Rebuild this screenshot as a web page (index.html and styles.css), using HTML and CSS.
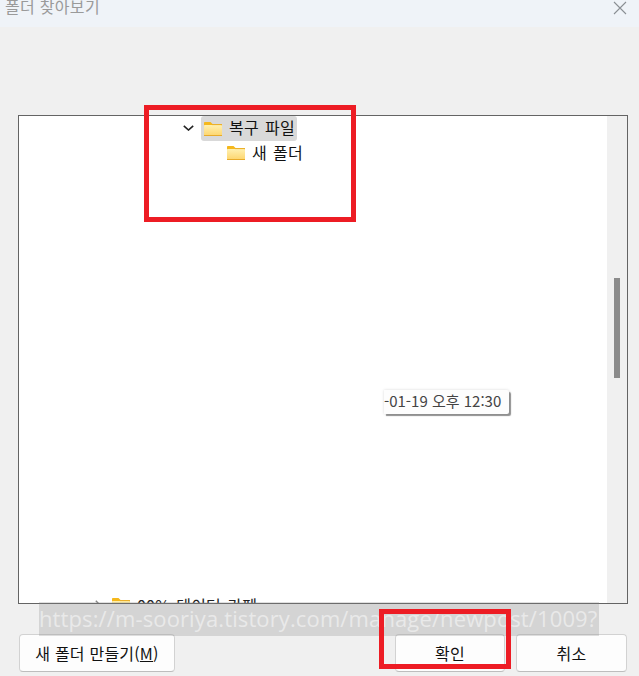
FILE: index.html
```html
<!DOCTYPE html>
<html lang="ko">
<head>
<meta charset="utf-8">
<title>폴더 찾아보기</title>
<link rel="stylesheet" href="styles.css">
</head>
<body>
<div class="dialog">
  <header class="titlebar">
    <span class="title">폴더 찾아보기</span>
    <svg class="close" width="14" height="14" viewBox="0 0 14 14"><path d="M1 1L13 13M13 1L1 13" stroke="#8a8f94" stroke-width="1.1" fill="none"/></svg>
  </header>
  <main class="content">
    <section class="treebox">
      <div class="tree">
        <div class="row row-root">
          <svg class="chevron" width="11" height="6" viewBox="0 0 11 6"><path d="M0.8 0.8L5.5 5L10.2 0.8" stroke="#222" stroke-width="1.6" fill="none"/></svg>
          <div class="selected">
            <svg class="folder" width="18" height="14" viewBox="0 0 18 14"><use href="#folder-shape"/></svg>
            <span>복구 파일</span>
          </div>
        </div>
        <div class="row row-child">
          <svg class="folder" width="18" height="14" viewBox="0 0 18 14"><use href="#folder-shape"/></svg>
          <span>새 폴더</span>
        </div>
        <div class="row row-clipped">
          <svg class="chevron-right" width="6" height="10" viewBox="0 0 6 10"><path d="M0.8 0.8L5 5L0.8 9.2" stroke="#888" stroke-width="1.4" fill="none"/></svg>
          <svg class="folder" width="18" height="14" viewBox="0 0 18 14"><use href="#folder-shape"/></svg>
          <span>00% 데이터 카페</span>
        </div>
      </div>
      <div class="scrollbar"><div class="thumb"></div></div>
      <div class="tooltip">-01-19 오후 12:30</div>
    </section>
    <footer class="buttons">
      <button class="btn btn-new">새 폴더 만들기(<u>M</u>)</button>
      <div class="btn-group">
        <button class="btn btn-ok">확인</button>
        <button class="btn btn-cancel">취소</button>
      </div>
    </footer>
  </main>
  <div class="url-overlay">https://m-sooriya.tistory.com/manage/newpost/1009?</div>
  <div class="mark mark-tree"></div>
  <div class="mark mark-ok"></div>
</div>
<svg class="defs" width="0" height="0">
  <defs>
    <linearGradient id="folder-fill" x1="0" y1="0" x2="0" y2="1">
      <stop offset="0" stop-color="#fff0b0"/>
      <stop offset="1" stop-color="#fdd56c"/>
    </linearGradient>
    <g id="folder-shape">
      <path d="M0 1.2A1 1 0 0 1 1 0H6.5L8.5 2H18V5H0Z" fill="#f5b81c"/>
      <rect x="0" y="3" width="18" height="11" rx="0.6" fill="url(#folder-fill)"/>
      <rect x="0" y="13" width="18" height="1" fill="#e8ab2a"/>
      <rect x="8" y="2.2" width="10" height="0.9" fill="#e9ae2e"/>
    </g>
  </defs>
</svg>
</body>
</html>
```
FILE: styles.css
```css
* { box-sizing: border-box; }
html, body { margin: 0; padding: 0; height: 100%; overflow: hidden; }
body { font-family: "Noto Sans CJK KR", "Noto Sans", sans-serif; background: #f0f0f0; color: #111; }

.dialog { position: relative; width: 639px; height: 676px; display: flex; flex-direction: column; overflow: hidden; }

.titlebar { height: 27px; flex: none; background: #eff3f8; display: flex; justify-content: space-between; padding: 0 12px 0 5px; overflow: hidden; }
.title { font-size: 16px; letter-spacing: 0.3px; line-height: 14px; color: #9a9a9a; margin-top: -1px; white-space: nowrap; }
.close { margin-top: 1px; }

.content { flex: 1; display: flex; flex-direction: column; padding: 88px 11px 5px 18px; }

.treebox { position: relative; height: 489px; flex: none; background: #fff; border: 1px solid #646464; display: flex; overflow: hidden; width: 610px; }
.tree { flex: 1; display: flex; flex-direction: column; font-size: 16px; letter-spacing: 0.2px; word-spacing: 1.5px; overflow: hidden; }
.row { display: flex; align-items: center; white-space: nowrap; }
.row-root { padding-left: 164px; height: 25px; gap: 7px; }
.selected { width: 96px; height: 25px; background: #d9d9d9; border-radius: 3px; display: flex; align-items: center; gap: 7px; padding-left: 3px; }
.selected span, .row-child span { position: relative; top: -2px; }
.row-child { padding-left: 208px; height: 25px; gap: 7px; }
.row-clipped { margin-top: auto; margin-bottom: -14px; height: 25px; padding-left: 76px; gap: 7px; color: #222; flex: none; }
.row-clipped .folder { margin-left: 4px; }
.folder { flex: none; display: block; }
.chevron { position: relative; top: -1px; }
.row-child .folder { position: relative; top: -1px; }

.scrollbar { width: 20px; flex: none; background: #f0f0f0; padding: 162px 0 0 7px; }
.thumb { width: 6px; height: 100px; background: #8b8b8b; }

.tooltip { position: absolute; left: 365px; top: 274px; width: 125px; height: 24px; background: #fdfdfd; border-radius: 0 2px 2px 0; box-shadow: 2px 2px 1px #8f8f8f, 0 0 3px #d8d8d8; font-size: 15px; line-height: 21px; color: #444; white-space: nowrap; overflow: hidden; }

.buttons { display: flex; justify-content: space-between; margin-top: 30px; padding: 0 1px; }
.btn-group { display: flex; gap: 11px; }
.btn { height: 38px; background: #fdfdfd; border: 1px solid #d2d2d2; border-bottom-color: #bdbdbd; border-radius: 4px; font-family: inherit; font-size: 16px; letter-spacing: 0.2px; color: #111; padding: 0; }
.btn-new { width: 156px; }
.btn-ok { width: 110px; }
.btn-cancel { width: 111px; }

.url-overlay { position: absolute; left: 39px; top: 602px; width: 560px; height: 34px; background: rgba(130, 130, 130, 0.26); color: rgba(255, 255, 255, 0.5); font-family: "Open Sans", sans-serif; font-size: 22px; letter-spacing: 0.12px; line-height: 33px; white-space: nowrap; overflow: hidden; }

.mark { position: absolute; border: 5px solid #ed1c24; }
.mark-tree { left: 144px; top: 105px; width: 212px; height: 117px; }
.mark-ok { left: 379px; top: 609px; width: 132px; height: 60px; }

.defs { position: absolute; }
```
